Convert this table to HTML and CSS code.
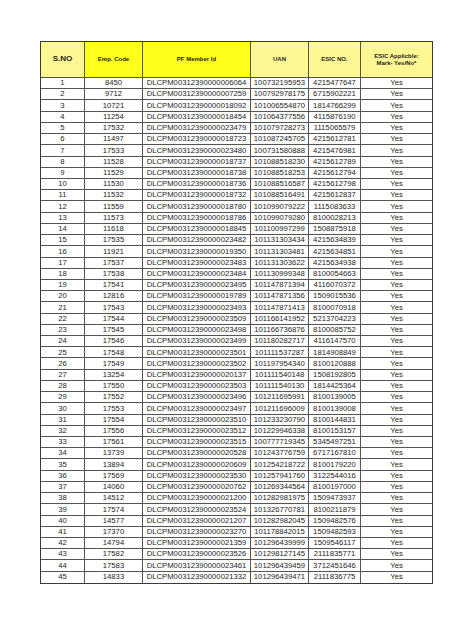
FILE: index.html
```html
<!DOCTYPE html>
<html>
<head>
<meta charset="utf-8">
<link rel="stylesheet" href="styles.css">
</head>
<body>
<div class="sheet">
  <div class="table">
    <div class="row head">
      <div class="c pale big">S.NO</div>
      <div class="c bright">Emp. Code</div>
      <div class="c bright">PF Member Id</div>
      <div class="c pale">UAN</div>
      <div class="c pale">ESIC NO.</div>
      <div class="c pale">ESIC Applicble:<br>Mark- Yes/No*</div>
    </div>
    <div class="row"><div class="c">1</div><div class="c">8450</div><div class="c">DLCPM00312390000006064</div><div class="c">100732195953</div><div class="c">4215477647</div><div class="c">Yes</div></div>
    <div class="row"><div class="c">2</div><div class="c">9712</div><div class="c">DLCPM00312390000007259</div><div class="c">100792978175</div><div class="c">6715902221</div><div class="c">Yes</div></div>
    <div class="row"><div class="c">3</div><div class="c">10721</div><div class="c">DLCPM00312390000018092</div><div class="c">101006554870</div><div class="c">1814766299</div><div class="c">Yes</div></div>
    <div class="row"><div class="c">4</div><div class="c">11254</div><div class="c">DLCPM00312390000018454</div><div class="c">101064377556</div><div class="c">4115876190</div><div class="c">Yes</div></div>
    <div class="row"><div class="c">5</div><div class="c">17532</div><div class="c">DLCPM00312390000023479</div><div class="c">101079728273</div><div class="c">1115065579</div><div class="c">Yes</div></div>
    <div class="row"><div class="c">6</div><div class="c">11497</div><div class="c">DLCPM00312390000018723</div><div class="c">101087245705</div><div class="c">4215612781</div><div class="c">Yes</div></div>
    <div class="row"><div class="c">7</div><div class="c">17533</div><div class="c">DLCPM00312390000023480</div><div class="c">100731580888</div><div class="c">4215476981</div><div class="c">Yes</div></div>
    <div class="row"><div class="c">8</div><div class="c">11528</div><div class="c">DLCPM00312390000018737</div><div class="c">101088518230</div><div class="c">4215612789</div><div class="c">Yes</div></div>
    <div class="row"><div class="c">9</div><div class="c">11529</div><div class="c">DLCPM00312390000018738</div><div class="c">101088518253</div><div class="c">4215612794</div><div class="c">Yes</div></div>
    <div class="row"><div class="c">10</div><div class="c">11530</div><div class="c">DLCPM00312390000018736</div><div class="c">101088516587</div><div class="c">4215612798</div><div class="c">Yes</div></div>
    <div class="row"><div class="c">11</div><div class="c">11532</div><div class="c">DLCPM00312390000018732</div><div class="c">101088516491</div><div class="c">4215612837</div><div class="c">Yes</div></div>
    <div class="row"><div class="c">12</div><div class="c">11559</div><div class="c">DLCPM00312390000018780</div><div class="c">101099079222</div><div class="c">1115083633</div><div class="c">Yes</div></div>
    <div class="row"><div class="c">13</div><div class="c">11573</div><div class="c">DLCPM00312390000018786</div><div class="c">101099079280</div><div class="c">8100028213</div><div class="c">Yes</div></div>
    <div class="row"><div class="c">14</div><div class="c">11618</div><div class="c">DLCPM00312390000018845</div><div class="c">101100997299</div><div class="c">1508875918</div><div class="c">Yes</div></div>
    <div class="row"><div class="c">15</div><div class="c">17535</div><div class="c">DLCPM00312390000023482</div><div class="c">101131303434</div><div class="c">4215634839</div><div class="c">Yes</div></div>
    <div class="row"><div class="c">16</div><div class="c">11921</div><div class="c">DLCPM00312390000019350</div><div class="c">101131303481</div><div class="c">4215634851</div><div class="c">Yes</div></div>
    <div class="row"><div class="c">17</div><div class="c">17537</div><div class="c">DLCPM00312390000023483</div><div class="c">101131303622</div><div class="c">4215634938</div><div class="c">Yes</div></div>
    <div class="row"><div class="c">18</div><div class="c">17538</div><div class="c">DLCPM00312390000023484</div><div class="c">101130999348</div><div class="c">8100054663</div><div class="c">Yes</div></div>
    <div class="row"><div class="c">19</div><div class="c">17541</div><div class="c">DLCPM00312390000023495</div><div class="c">101147871394</div><div class="c">4116070372</div><div class="c">Yes</div></div>
    <div class="row"><div class="c">20</div><div class="c">12816</div><div class="c">DLCPM00312390000019789</div><div class="c">101147871356</div><div class="c">1509015536</div><div class="c">Yes</div></div>
    <div class="row"><div class="c">21</div><div class="c">17543</div><div class="c">DLCPM00312390000023493</div><div class="c">101147871413</div><div class="c">8100070918</div><div class="c">Yes</div></div>
    <div class="row"><div class="c">22</div><div class="c">17544</div><div class="c">DLCPM00312390000023509</div><div class="c">101166141952</div><div class="c">5213704223</div><div class="c">Yes</div></div>
    <div class="row"><div class="c">23</div><div class="c">17545</div><div class="c">DLCPM00312390000023498</div><div class="c">101166736876</div><div class="c">8100085752</div><div class="c">Yes</div></div>
    <div class="row"><div class="c">24</div><div class="c">17546</div><div class="c">DLCPM00312390000023499</div><div class="c">101180282717</div><div class="c">4116147570</div><div class="c">Yes</div></div>
    <div class="row"><div class="c">25</div><div class="c">17548</div><div class="c">DLCPM00312390000023501</div><div class="c">101111537287</div><div class="c">1814908849</div><div class="c">Yes</div></div>
    <div class="row"><div class="c">26</div><div class="c">17549</div><div class="c">DLCPM00312390000023502</div><div class="c">101197954340</div><div class="c">8100120888</div><div class="c">Yes</div></div>
    <div class="row"><div class="c">27</div><div class="c">13254</div><div class="c">DLCPM00312390000020137</div><div class="c">101111540148</div><div class="c">1508192805</div><div class="c">Yes</div></div>
    <div class="row"><div class="c">28</div><div class="c">17550</div><div class="c">DLCPM00312390000023503</div><div class="c">101111540130</div><div class="c">1814425364</div><div class="c">Yes</div></div>
    <div class="row"><div class="c">29</div><div class="c">17552</div><div class="c">DLCPM00312390000023496</div><div class="c">101211695991</div><div class="c">8100139005</div><div class="c">Yes</div></div>
    <div class="row"><div class="c">30</div><div class="c">17553</div><div class="c">DLCPM00312390000023497</div><div class="c">101211696009</div><div class="c">8100139008</div><div class="c">Yes</div></div>
    <div class="row"><div class="c">31</div><div class="c">17554</div><div class="c">DLCPM00312390000023510</div><div class="c">101233230790</div><div class="c">8100144831</div><div class="c">Yes</div></div>
    <div class="row"><div class="c">32</div><div class="c">17556</div><div class="c">DLCPM00312390000023512</div><div class="c">101229946338</div><div class="c">8100153157</div><div class="c">Yes</div></div>
    <div class="row"><div class="c">33</div><div class="c">17561</div><div class="c">DLCPM00312390000023515</div><div class="c">100777719345</div><div class="c">5345497251</div><div class="c">Yes</div></div>
    <div class="row"><div class="c">34</div><div class="c">13739</div><div class="c">DLCPM00312390000020528</div><div class="c">101243776759</div><div class="c">6717167810</div><div class="c">Yes</div></div>
    <div class="row"><div class="c">35</div><div class="c">13894</div><div class="c">DLCPM00312390000020609</div><div class="c">101254218722</div><div class="c">8100179220</div><div class="c">Yes</div></div>
    <div class="row"><div class="c">36</div><div class="c">17569</div><div class="c">DLCPM00312390000023530</div><div class="c">101257941760</div><div class="c">3122544016</div><div class="c">Yes</div></div>
    <div class="row"><div class="c">37</div><div class="c">14060</div><div class="c">DLCPM00312390000020762</div><div class="c">101269344564</div><div class="c">8100197000</div><div class="c">Yes</div></div>
    <div class="row"><div class="c">38</div><div class="c">14512</div><div class="c">DLCPM00312390000021200</div><div class="c">101282981975</div><div class="c">1509473937</div><div class="c">Yes</div></div>
    <div class="row"><div class="c">39</div><div class="c">17574</div><div class="c">DLCPM00312390000023524</div><div class="c">101326770781</div><div class="c">8100211879</div><div class="c">Yes</div></div>
    <div class="row"><div class="c">40</div><div class="c">14577</div><div class="c">DLCPM00312390000021207</div><div class="c">101282982045</div><div class="c">1509482576</div><div class="c">Yes</div></div>
    <div class="row"><div class="c">41</div><div class="c">17370</div><div class="c">DLCPM00312390000023270</div><div class="c">101178842015</div><div class="c">1509482593</div><div class="c">Yes</div></div>
    <div class="row"><div class="c">42</div><div class="c">14794</div><div class="c">DLCPM00312390000021359</div><div class="c">101296439999</div><div class="c">1509546117</div><div class="c">Yes</div></div>
    <div class="row"><div class="c">43</div><div class="c">17582</div><div class="c">DLCPM00312390000023526</div><div class="c">101298127145</div><div class="c">2111835771</div><div class="c">Yes</div></div>
    <div class="row"><div class="c">44</div><div class="c">17583</div><div class="c">DLCPM00312390000023461</div><div class="c">101296439459</div><div class="c">3712451646</div><div class="c">Yes</div></div>
    <div class="row"><div class="c">45</div><div class="c">14833</div><div class="c">DLCPM00312390000021332</div><div class="c">101296439471</div><div class="c">2111836775</div><div class="c">Yes</div></div>
  </div>
</div>
</body>
</html>
```
FILE: styles.css
```css
html, body {
  margin: 0;
  padding: 0;
  background: #ffffff;
}
.sheet {
  padding: 41px 0 0 40px;
}
.table {
  width: 393px;
  border: 1px solid #3a3a3a;
  box-sizing: border-box;
  font-family: "Liberation Sans", Arial, sans-serif;
  color: #1e1e1e;
}
.row {
  display: grid;
  grid-template-columns: 44px 58px 108px 58px 52px 1fr;
  height: 11.22px;
  box-sizing: border-box;
  border-bottom: 1px solid #555555;
}
.row:last-child {
  border-bottom: none;
}
.c {
  display: flex;
  align-items: center;
  justify-content: center;
  border-right: 1px solid #555555;
  font-size: 7.7px;
  line-height: 1;
  white-space: nowrap;
  overflow: hidden;
}
.c:last-child {
  border-right: none;
}
.head {
  height: 36px;
}
.head .c {
  font-weight: bold;
  font-size: 6px;
  line-height: 6.2px;
  text-align: center;
}
.head .big {
  font-size: 8px;
}
.pale {
  background: #fdf894;
}
.bright {
  background: #ffff1c;
}
```
